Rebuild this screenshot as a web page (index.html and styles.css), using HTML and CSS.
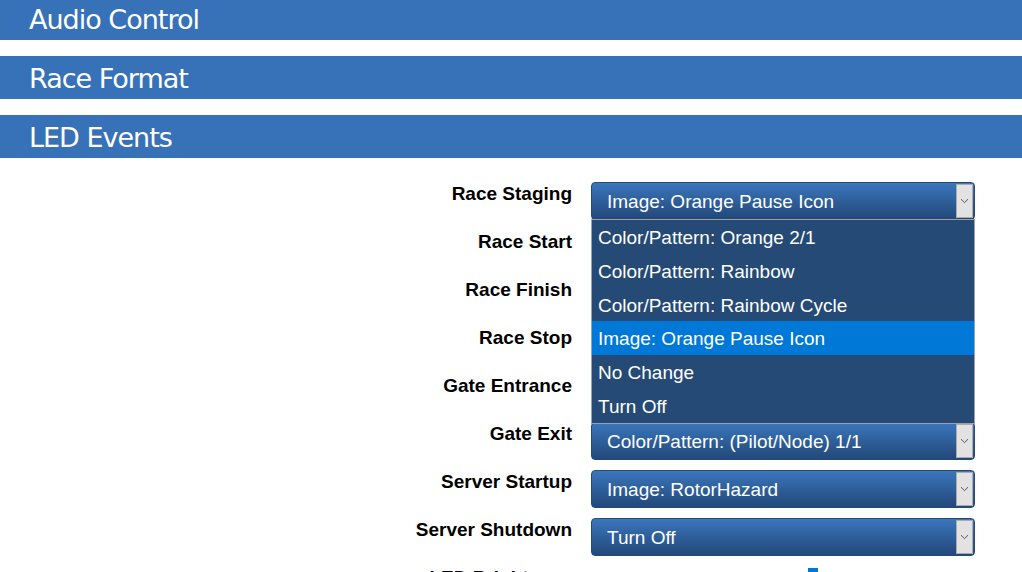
FILE: index.html
```html
<!DOCTYPE html>
<html lang="en">
<head>
<meta charset="utf-8">
<title>LED Events</title>
<link rel="stylesheet" href="styles.css">
</head>
<body>
<div class="page">
  <h2 class="panel-head">Audio Control</h2>
  <h2 class="panel-head">Race Format</h2>
  <h2 class="panel-head">LED Events</h2>
  <div class="form">
    <div class="row">
      <label class="lbl">Race Staging</label>
      <div class="field">
        <div class="select"><span class="val">Image: Orange Pause Icon</span><span class="arrow"><svg width="9" height="6" viewBox="0 0 9 6"><path d="M1 1.2 L4.5 4.6 L8 1.2" fill="none" stroke="#555" stroke-width="1"/></svg></span></div>
        <ul class="dropdown">
          <li>Color/Pattern: Orange 2/1</li>
          <li>Color/Pattern: Rainbow</li>
          <li>Color/Pattern: Rainbow Cycle</li>
          <li class="sel">Image: Orange Pause Icon</li>
          <li>No Change</li>
          <li>Turn Off</li>
        </ul>
      </div>
    </div>
    <div class="row">
      <label class="lbl">Race Start</label>
      <div class="field"><div class="select"><span class="val"></span><span class="arrow"></span></div></div>
    </div>
    <div class="row">
      <label class="lbl">Race Finish</label>
      <div class="field"><div class="select"><span class="val"></span><span class="arrow"></span></div></div>
    </div>
    <div class="row">
      <label class="lbl">Race Stop</label>
      <div class="field"><div class="select"><span class="val"></span><span class="arrow"></span></div></div>
    </div>
    <div class="row">
      <label class="lbl">Gate Entrance</label>
      <div class="field"><div class="select"><span class="val"></span><span class="arrow"></span></div></div>
    </div>
    <div class="row">
      <label class="lbl">Gate Exit</label>
      <div class="field"><div class="select"><span class="val">Color/Pattern: (Pilot/Node) 1/1</span><span class="arrow"><svg width="9" height="6" viewBox="0 0 9 6"><path d="M1 1.2 L4.5 4.6 L8 1.2" fill="none" stroke="#555" stroke-width="1"/></svg></span></div></div>
    </div>
    <div class="row">
      <label class="lbl">Server Startup</label>
      <div class="field"><div class="select"><span class="val">Image: RotorHazard</span><span class="arrow"><svg width="9" height="6" viewBox="0 0 9 6"><path d="M1 1.2 L4.5 4.6 L8 1.2" fill="none" stroke="#555" stroke-width="1"/></svg></span></div></div>
    </div>
    <div class="row">
      <label class="lbl">Server Shutdown</label>
      <div class="field"><div class="select"><span class="val">Turn Off</span><span class="arrow"><svg width="9" height="6" viewBox="0 0 9 6"><path d="M1 1.2 L4.5 4.6 L8 1.2" fill="none" stroke="#555" stroke-width="1"/></svg></span></div></div>
    </div>
    <div class="row">
      <label class="lbl">LED Brightness</label>
      <div class="field"><div class="slider"><span class="thumb"></span><span class="track"></span></div></div>
    </div>
  </div>
</div>
</body>
</html>
```

FILE: styles.css
```css
html, body {
  margin: 0;
  padding: 0;
  background: #ffffff;
}
body {
  width: 1022px;
  overflow: hidden;
}
.page {
  margin-top: -3px;
}
.panel-head {
  margin: 0 0 16px 0;
  height: 43px;
  box-sizing: border-box;
  padding: 2px 0 0 29px;
  line-height: 41px;
  background: #3772b9;
  color: #ffffff;
  font-family: "DejaVu Sans", sans-serif;
  font-weight: normal;
  font-size: 27px;
  letter-spacing: -1px;
}
.form {
  padding-top: 8px;
  display: flex;
  flex-direction: column;
  gap: 10px;
}
.row {
  display: grid;
  grid-template-columns: 572px 384px;
  column-gap: 19px;
  align-items: start;
  height: 38px;
}
.lbl {
  text-align: right;
  font-family: "Liberation Sans", Arial, sans-serif;
  font-weight: bold;
  font-size: 19px;
  line-height: 22px;
  padding-top: 1px;
  color: #000;
}
.field {
  position: relative;
}
.select {
  height: 38px;
  box-sizing: border-box;
  border: 1px solid #234a7a;
  border-radius: 4px;
  background: linear-gradient(#3b76bb, #224879);
  display: flex;
  align-items: center;
  justify-content: space-between;
  padding: 1px 1px 0 15px;
  color: #ffffff;
  font-family: "Liberation Sans", Arial, sans-serif;
  font-size: 19px;
}
.val {
  white-space: nowrap;
}
.arrow {
  width: 17px;
  height: 34px;
  box-sizing: border-box;
  margin-top: -1px;
  background: #e2e2e2;
  border: 1px solid #ababab;
  display: flex;
  align-items: center;
  justify-content: center;
}
.dropdown {
  position: absolute;
  top: 37px;
  left: 0;
  width: 384px;
  box-sizing: border-box;
  margin: 0;
  padding: 0;
  list-style: none;
  background: #244a75;
  border: 1px solid #a0a0a0;
  z-index: 5;
  font-family: "Liberation Sans", Arial, sans-serif;
  font-size: 19px;
  color: #ffffff;
}
.dropdown li {
  height: 33.8px;
  line-height: 35px;
  padding-left: 6px;
  white-space: nowrap;
}
.dropdown li.sel {
  background: #0078d7;
}
.slider {
  padding-top: 2px;
}
.thumb {
  display: block;
  width: 10px;
  height: 20px;
  margin-left: 217px;
  background: #0078d7;
}
.track {
  display: block;
  height: 2px;
  background: #b0b0b0;
}
```
